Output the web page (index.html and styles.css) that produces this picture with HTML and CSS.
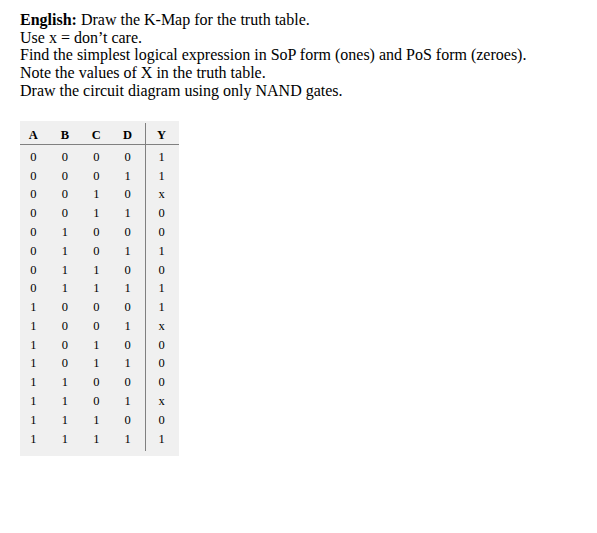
FILE: index.html
```html
<!DOCTYPE html>
<html>
<head>
<meta charset="utf-8">
<link rel="stylesheet" href="styles.css">
</head>
<body>
<div class="page">
  <div class="intro">
    <p><b>English:</b> Draw the K-Map for the truth table.</p>
    <p>Use x = don’t care.</p>
    <p>Find the simplest logical expression in SoP form (ones) and PoS form (zeroes).</p>
    <p>Note the values of X in the truth table.</p>
    <p>Draw the circuit diagram using only NAND gates.</p>
  </div>
  <div class="tt">
    <div class="inputs">
      <div class="head row"><span>A</span><span>B</span><span>C</span><span>D</span></div>
      <div class="body">
        <div class="row"><span>0</span><span>0</span><span>0</span><span>0</span></div>
        <div class="row"><span>0</span><span>0</span><span>0</span><span>1</span></div>
        <div class="row"><span>0</span><span>0</span><span>1</span><span>0</span></div>
        <div class="row"><span>0</span><span>0</span><span>1</span><span>1</span></div>
        <div class="row"><span>0</span><span>1</span><span>0</span><span>0</span></div>
        <div class="row"><span>0</span><span>1</span><span>0</span><span>1</span></div>
        <div class="row"><span>0</span><span>1</span><span>1</span><span>0</span></div>
        <div class="row"><span>0</span><span>1</span><span>1</span><span>1</span></div>
        <div class="row"><span>1</span><span>0</span><span>0</span><span>0</span></div>
        <div class="row"><span>1</span><span>0</span><span>0</span><span>1</span></div>
        <div class="row"><span>1</span><span>0</span><span>1</span><span>0</span></div>
        <div class="row"><span>1</span><span>0</span><span>1</span><span>1</span></div>
        <div class="row"><span>1</span><span>1</span><span>0</span><span>0</span></div>
        <div class="row"><span>1</span><span>1</span><span>0</span><span>1</span></div>
        <div class="row"><span>1</span><span>1</span><span>1</span><span>0</span></div>
        <div class="row"><span>1</span><span>1</span><span>1</span><span>1</span></div>
      </div>
    </div>
    <div class="outputs">
      <div class="head"><span>Y</span></div>
      <div class="body">
        <span>1</span><span>1</span><span>x</span><span>0</span>
        <span>0</span><span>1</span><span>0</span><span>1</span>
        <span>1</span><span>x</span><span>0</span><span>0</span>
        <span>0</span><span>x</span><span>0</span><span>1</span>
      </div>
    </div>
  </div>
</div>
</body>
</html>
```
FILE: styles.css
```css
html, body {
  margin: 0;
  padding: 0;
  background: #ffffff;
}
.page {
  padding: 10.6px 0 0 20px;
  font-family: "Liberation Serif", "Times New Roman", serif;
  color: #000;
}
.intro p {
  margin: 0;
  font-size: 16px;
  line-height: 17.9px;
}
.tt {
  margin-top: 21px;
  width: 159px;
  background: #f0f0f0;
  padding: 2px 0 5px 0;
  display: flex;
  font-family: "Liberation Serif", "Times New Roman", serif;
  font-size: 12.5px;
  color: #000;
}
.tt .head {
  height: 22px;
  box-sizing: border-box;
  padding-top: 4px;
  line-height: 17px;
  font-weight: bold;
  border-bottom: 1px solid #808080;
}
.tt .body {
  padding: 2.6px 0 1.6px 0;
}
.inputs {
  width: 126px;
}
.row {
  display: grid;
  grid-template-columns: 29.35px 31.3px 31.3px 31.3px;
  line-height: 18.8px;
  text-align: center;
}
.row span:first-child {
  padding-right: 2.7px;
}
.outputs {
  width: 33px;
  border-left: 1px solid #808080;
  text-align: center;
  height: 328px;
}
.outputs .head {
  padding-right: 2px;
}
.outputs .body span {
  display: block;
  line-height: 18.8px;
  padding-right: 2px;
}
```
